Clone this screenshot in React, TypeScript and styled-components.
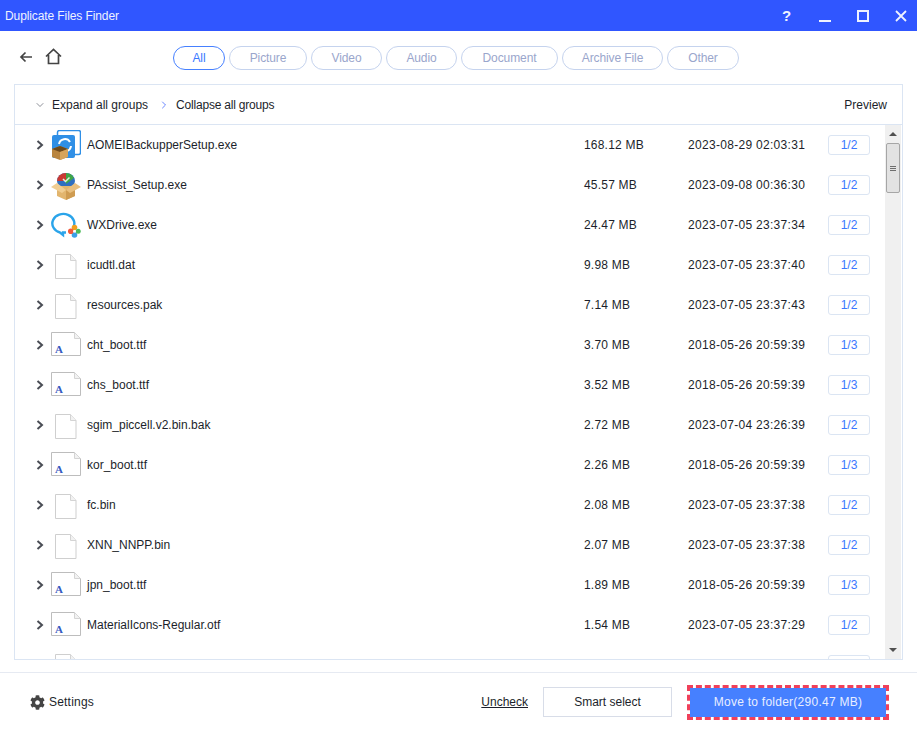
import styled, { createGlobalStyle } from "styled-components";
import { ChevronDown, ChevronRight } from "lucide-react";
import { FaCog } from "react-icons/fa";

const GlobalStyle = createGlobalStyle`
  html, body {
    margin: 0;
    padding: 0;
    background: #fff;
    overflow: hidden;
  }
  body {
    font-family: "Liberation Sans", Arial, sans-serif;
    font-size: 12px;
    color: #1c1f2b;
  }
`;

const Window = styled.div`
  width: 917px;
  height: 731px;
  display: flex;
  flex-direction: column;
`;

const TitleBar = styled.header`
  height: 31px;
  flex: none;
  display: flex;
  align-items: center;
  justify-content: space-between;
  padding: 0 10px 0 5px;
  background: #3056ff;
  color: #eef2ff;
  letter-spacing: -0.1px;
`;

const WindowButtons = styled.div`
  display: flex;
  align-items: center;
  gap: 26px;
`;

const HelpMark = styled.span`
  font-size: 15px;
  font-weight: 700;
  margin-right: 2px;
`;

const Toolbar = styled.div`
  height: 53px;
  box-sizing: border-box;
  flex: none;
  display: flex;
  align-items: flex-start;
  padding: 15px 0 0 19px;
`;

const NavIcons = styled.div`
  width: 154px;
  margin-top: 2px;
  display: flex;
  align-items: center;
  gap: 12px;
  flex: none;
`;

const Tabs = styled.nav`
  display: flex;
  gap: 4px;
`;

const Tab = styled.button<{ $active?: boolean; $w: number }>`
  width: ${({ $w }) => $w}px;
  height: 24px;
  padding: 0;
  border-radius: 12px;
  background: #fff;
  font: inherit;
  letter-spacing: -0.1px;
  border: 1px solid ${({ $active }) => ($active ? "#4680ff" : "#c5d3ee")};
  color: ${({ $active }) => ($active ? "#3a78ff" : "#9aa6cc")};
`;

const Panel = styled.section`
  height: 576px;
  box-sizing: border-box;
  flex: none;
  margin: 0 14px;
  display: flex;
  flex-direction: column;
  border: 1px solid #dbe5f3;
  overflow: hidden;
`;

const PanelHeader = styled.div`
  height: 39px;
  flex: none;
  display: flex;
  align-items: center;
  padding: 0 15px 0 19px;
  border-bottom: 1px solid #dbe5f3;
`;

const HeaderLink = styled.span<{ $tight?: boolean }>`
  display: flex;
  align-items: center;
  gap: 6px;
  margin-right: 10px;
  letter-spacing: ${({ $tight }) => ($tight ? "-0.2px" : "0")};
`;

const PreviewLabel = styled.span`
  margin-left: auto;
`;

const ListArea = styled.div`
  flex: 1;
  min-height: 0;
  display: flex;
`;

const Rows = styled.div`
  flex: 1;
  min-width: 0;
  overflow: hidden;
`;

const Row = styled.div`
  height: 40px;
  display: grid;
  grid-template-columns: 18px 36px 497px 104px 140px 42px;
  align-items: center;
  padding-left: 18px;
  box-sizing: border-box;
`;

const Expander = styled.span`
  display: flex;
  padding-left: 3px;
`;

const SizeCell = styled.span`
  letter-spacing: 0.2px;
`;

const DateCell = styled.span`
  letter-spacing: 0.3px;
`;

const Badge = styled.span`
  height: 20px;
  box-sizing: border-box;
  display: flex;
  align-items: center;
  justify-content: center;
  border: 1px solid #dbe5f3;
  border-radius: 3px;
  color: #3a78ff;
`;

const Scrollbar = styled.div`
  width: 16px;
  flex: none;
  margin-right: 1px;
  background: #f0f0f0;
  display: flex;
  flex-direction: column;
  align-items: center;
`;

const ScrollArrow = styled.div<{ $down?: boolean }>`
  height: 18px;
  flex: none;
  display: flex;
  align-items: center;
  justify-content: center;
  &::before {
    content: "";
    border-left: 4px solid transparent;
    border-right: 4px solid transparent;
    ${({ $down }) =>
      $down ? "border-top: 4px solid #505050;" : "border-bottom: 4px solid #505050;"}
  }
`;

const ScrollThumb = styled.div`
  width: 14px;
  height: 50px;
  flex: none;
  box-sizing: border-box;
  border: 1px solid #a6a6a6;
  border-radius: 2px;
  background: #e2e2e2;
  display: flex;
  flex-direction: column;
  align-items: center;
  justify-content: center;
  gap: 1px;
  i {
    display: block;
    width: 6px;
    height: 1px;
    background: #6e6e6e;
  }
`;

const ScrollSpace = styled.div`
  flex: 1;
`;

const Footer = styled.footer`
  flex: 1;
  margin-top: 12px;
  display: flex;
  align-items: center;
  padding: 0 28px 0 30px;
  border-top: 1px solid #e6eaf2;
`;

const SettingsLink = styled.span`
  display: flex;
  align-items: center;
  gap: 4px;
  margin-right: auto;
  letter-spacing: 0.2px;
`;

const UncheckLink = styled.a`
  color: inherit;
  text-decoration: underline;
  margin-right: 15px;
`;

const SmartButton = styled.button`
  width: 129px;
  height: 30px;
  padding: 0;
  background: #fff;
  border: 1px solid #d8dde8;
  font: inherit;
  color: inherit;
  margin-right: 15px;
`;

const MoveButton = styled.button`
  width: 202px;
  height: 35px;
  padding: 0;
  box-sizing: border-box;
  border: 3px dashed #f0405a;
  background: #4680ff;
  background-clip: padding-box;
  color: #e8eeff;
  font: inherit;
  letter-spacing: 0.25px;
`;

const RowChevron = () => (
  <svg width="8" height="10" viewBox="0 0 8 10">
    <path d="M1.500 1l4.500 4-4.500 4" fill="none" stroke="#4a4d55" strokeWidth="2" />
  </svg>
);

const FileIcon = () => (
  <svg width="30" height="30" viewBox="0 0 30 30">
    <path d="M4.500 4.500h15l5.500 6v18h-20.500z" fill="#fff" stroke="#cfcfcf" />
    <path d="M19.500 4.500v6h5.500" fill="#f2f2f2" stroke="#d4d4d4" />
  </svg>
);

const FontIcon = () => (
  <svg width="30" height="30" viewBox="0 0 30 30">
    <path d="M.5 2.500h23l6 6v17h-29z" fill="#fff" stroke="#bdbdbd" />
    <path d="M23.500 2.500v6h6" fill="#f2f2f2" stroke="#d4d4d4" />
    <text x="4" y="23" fontFamily="Liberation Serif, serif" fontSize="11" fontWeight="700" fill="#3458c0">
      A
    </text>
  </svg>
);

const AomeiIcon = () => (
  <svg width="30" height="30" viewBox="0 0 30 30">
    <rect x="6.500" y=".5" width="23" height="24" rx="2" fill="#fff" stroke="#2f8fe6" strokeWidth="1.500" />
    <rect x="1" y="5" width="23" height="23" rx="2" fill="#2f8fe6" />
    <path d="M8 14a6 6 0 0 1 11-2M20 16a6 6 0 0 1-4 5" fill="none" stroke="#fff" strokeWidth="2" />
    <path d="M1 19l8-3 8 3v8l-8 3-8-3z" fill="#b9853f" />
    <path d="M1 19l8 3 8-3-8-3z" fill="#6e4a1c" />
    <path d="M9 22v8l8-3v-8z" fill="#d6a45c" />
  </svg>
);

const PassistIcon = () => (
  <svg width="30" height="30" viewBox="0 0 30 30">
    <ellipse cx="15" cy="11" rx="9" ry="8" fill="#2f6fc0" />
    <path d="M6 11a9 8 0 0 1 9-8v8z" fill="#c93a33" />
    <path d="M15 3a9 8 0 0 1 8 5l-8 6z" fill="#3fa648" />
    <path d="M12 9l2.500 2.500 4-4" fill="none" stroke="#dff5d8" strokeWidth="1.500" />
    <path d="M6 16h18v10l-9 4-9-4z" fill="#e2b56e" />
    <path d="M15 20v10l9-4V16z" fill="#cf9c52" />
    <path d="M6 13l9 7-4 3-11-6z" fill="#f0cd92" />
    <path d="M24 13l-9 7 4 3 11-6z" fill="#e8bf7f" />
  </svg>
);

const WxDriveIcon = () => (
  <svg width="30" height="30" viewBox="0 0 30 30">
    <path
      d="M22 18a11 9.500 0 1 0-13 4.500l3 2.500v-2.500h3"
      fill="none"
      stroke="#2aa4ea"
      strokeWidth="2.400"
    />
    <circle cx="23.500" cy="17.500" r="2.800" fill="#f0a020" />
    <circle cx="23.500" cy="25" r="2.800" fill="#3aa0e8" />
    <circle cx="19.800" cy="21.200" r="2.800" fill="#f05a3c" />
    <circle cx="27.200" cy="21.200" r="2.500" fill="#4cbb5a" />
    <circle cx="23.500" cy="21.200" r="1.300" fill="#fff" />
  </svg>
);

const HomeIcon = () => (
  <svg width="17" height="17" viewBox="0 0 17 17">
    <path d="M1 8.500L8.500 1.500 16 8.500M3.500 7v8.500h10V7" fill="none" stroke="#444" strokeWidth="1.700" />
  </svg>
);

const BackIcon = () => (
  <svg width="14" height="12" viewBox="0 0 14 12">
    <path d="M13 6H2M6.500 1.500L2 6l4.500 4.500" fill="none" stroke="#444" strokeWidth="1.700" />
  </svg>
);

const MinIcon = () => (
  <svg width="12" height="12" viewBox="0 0 12 12">
    <path d="M0 11h12" stroke="#eef2ff" strokeWidth="2" />
  </svg>
);

const MaxIcon = () => (
  <svg width="12" height="12" viewBox="0 0 12 12">
    <rect x="1" y="1" width="10" height="10" fill="none" stroke="#eef2ff" strokeWidth="2" />
  </svg>
);

const CloseIcon = () => (
  <svg width="12" height="12" viewBox="0 0 12 12">
    <path d="M1 1l10 10M11 1L1 11" stroke="#eef2ff" strokeWidth="1.800" />
  </svg>
);

const icons = {
  aomei: <AomeiIcon />,
  passist: <PassistIcon />,
  wx: <WxDriveIcon />,
  file: <FileIcon />,
  font: <FontIcon />,
};

type FileRow = {
  icon: keyof typeof icons;
  name: string;
  size: string;
  date: string;
  count: string;
};

const files: FileRow[] = [
  { icon: "aomei", name: "AOMEIBackupperSetup.exe", size: "168.12 MB", date: "2023-08-29 02:03:31", count: "1/2" },
  { icon: "passist", name: "PAssist_Setup.exe", size: "45.57 MB", date: "2023-09-08 00:36:30", count: "1/2" },
  { icon: "wx", name: "WXDrive.exe", size: "24.47 MB", date: "2023-07-05 23:37:34", count: "1/2" },
  { icon: "file", name: "icudtl.dat", size: "9.98 MB", date: "2023-07-05 23:37:40", count: "1/2" },
  { icon: "file", name: "resources.pak", size: "7.14 MB", date: "2023-07-05 23:37:43", count: "1/2" },
  { icon: "font", name: "cht_boot.ttf", size: "3.70 MB", date: "2018-05-26 20:59:39", count: "1/3" },
  { icon: "font", name: "chs_boot.ttf", size: "3.52 MB", date: "2018-05-26 20:59:39", count: "1/3" },
  { icon: "file", name: "sgim_piccell.v2.bin.bak", size: "2.72 MB", date: "2023-07-04 23:26:39", count: "1/2" },
  { icon: "font", name: "kor_boot.ttf", size: "2.26 MB", date: "2018-05-26 20:59:39", count: "1/3" },
  { icon: "file", name: "fc.bin", size: "2.08 MB", date: "2023-07-05 23:37:38", count: "1/2" },
  { icon: "file", name: "XNN_NNPP.bin", size: "2.07 MB", date: "2023-07-05 23:37:38", count: "1/2" },
  { icon: "font", name: "jpn_boot.ttf", size: "1.89 MB", date: "2018-05-26 20:59:39", count: "1/3" },
  { icon: "font", name: "MaterialIcons-Regular.otf", size: "1.54 MB", date: "2023-07-05 23:37:29", count: "1/2" },
  { icon: "file", name: "", size: "", date: "", count: "" },
];

const tabs = [
  { label: "All", w: 52, active: true },
  { label: "Picture", w: 78 },
  { label: "Video", w: 71 },
  { label: "Audio", w: 71 },
  { label: "Document", w: 97 },
  { label: "Archive File", w: 101 },
  { label: "Other", w: 72 },
];

const App = () => (
  <Window>
    <GlobalStyle />
    <TitleBar>
      <span>Duplicate Files Finder</span>
      <WindowButtons>
        <HelpMark>?</HelpMark>
        <MinIcon />
        <MaxIcon />
        <CloseIcon />
      </WindowButtons>
    </TitleBar>
    <Toolbar>
      <NavIcons>
        <BackIcon />
        <HomeIcon />
      </NavIcons>
      <Tabs>
        {tabs.map((t) => (
          <Tab key={t.label} $active={t.active} $w={t.w}>
            {t.label}
          </Tab>
        ))}
      </Tabs>
    </Toolbar>
    <Panel>
      <PanelHeader>
        <HeaderLink>
          <ChevronDown size={12} color="#4f5460" strokeWidth={1.3} />
          Expand all groups
        </HeaderLink>
        <HeaderLink $tight>
          <ChevronRight size={12} color="#3a5fff" strokeWidth={1.5} />
          Collapse all groups
        </HeaderLink>
        <PreviewLabel>Preview</PreviewLabel>
      </PanelHeader>
      <ListArea>
        <Rows>
          {files.map((f, i) => (
            <Row key={i}>
              <Expander>
                <RowChevron />
              </Expander>
              {icons[f.icon]}
              <span>{f.name}</span>
              <SizeCell>{f.size}</SizeCell>
              <DateCell>{f.date}</DateCell>
              <Badge>{f.count}</Badge>
            </Row>
          ))}
        </Rows>
        <Scrollbar>
          <ScrollArrow />
          <ScrollThumb>
            <i />
            <i />
            <i />
          </ScrollThumb>
          <ScrollSpace />
          <ScrollArrow $down />
        </Scrollbar>
      </ListArea>
    </Panel>
    <Footer>
      <SettingsLink>
        <FaCog size={15} color="#444" />
        Settings
      </SettingsLink>
      <UncheckLink>Uncheck</UncheckLink>
      <SmartButton>Smart select</SmartButton>
      <MoveButton>Move to folder(290.47 MB)</MoveButton>
    </Footer>
  </Window>
);

export default App;
